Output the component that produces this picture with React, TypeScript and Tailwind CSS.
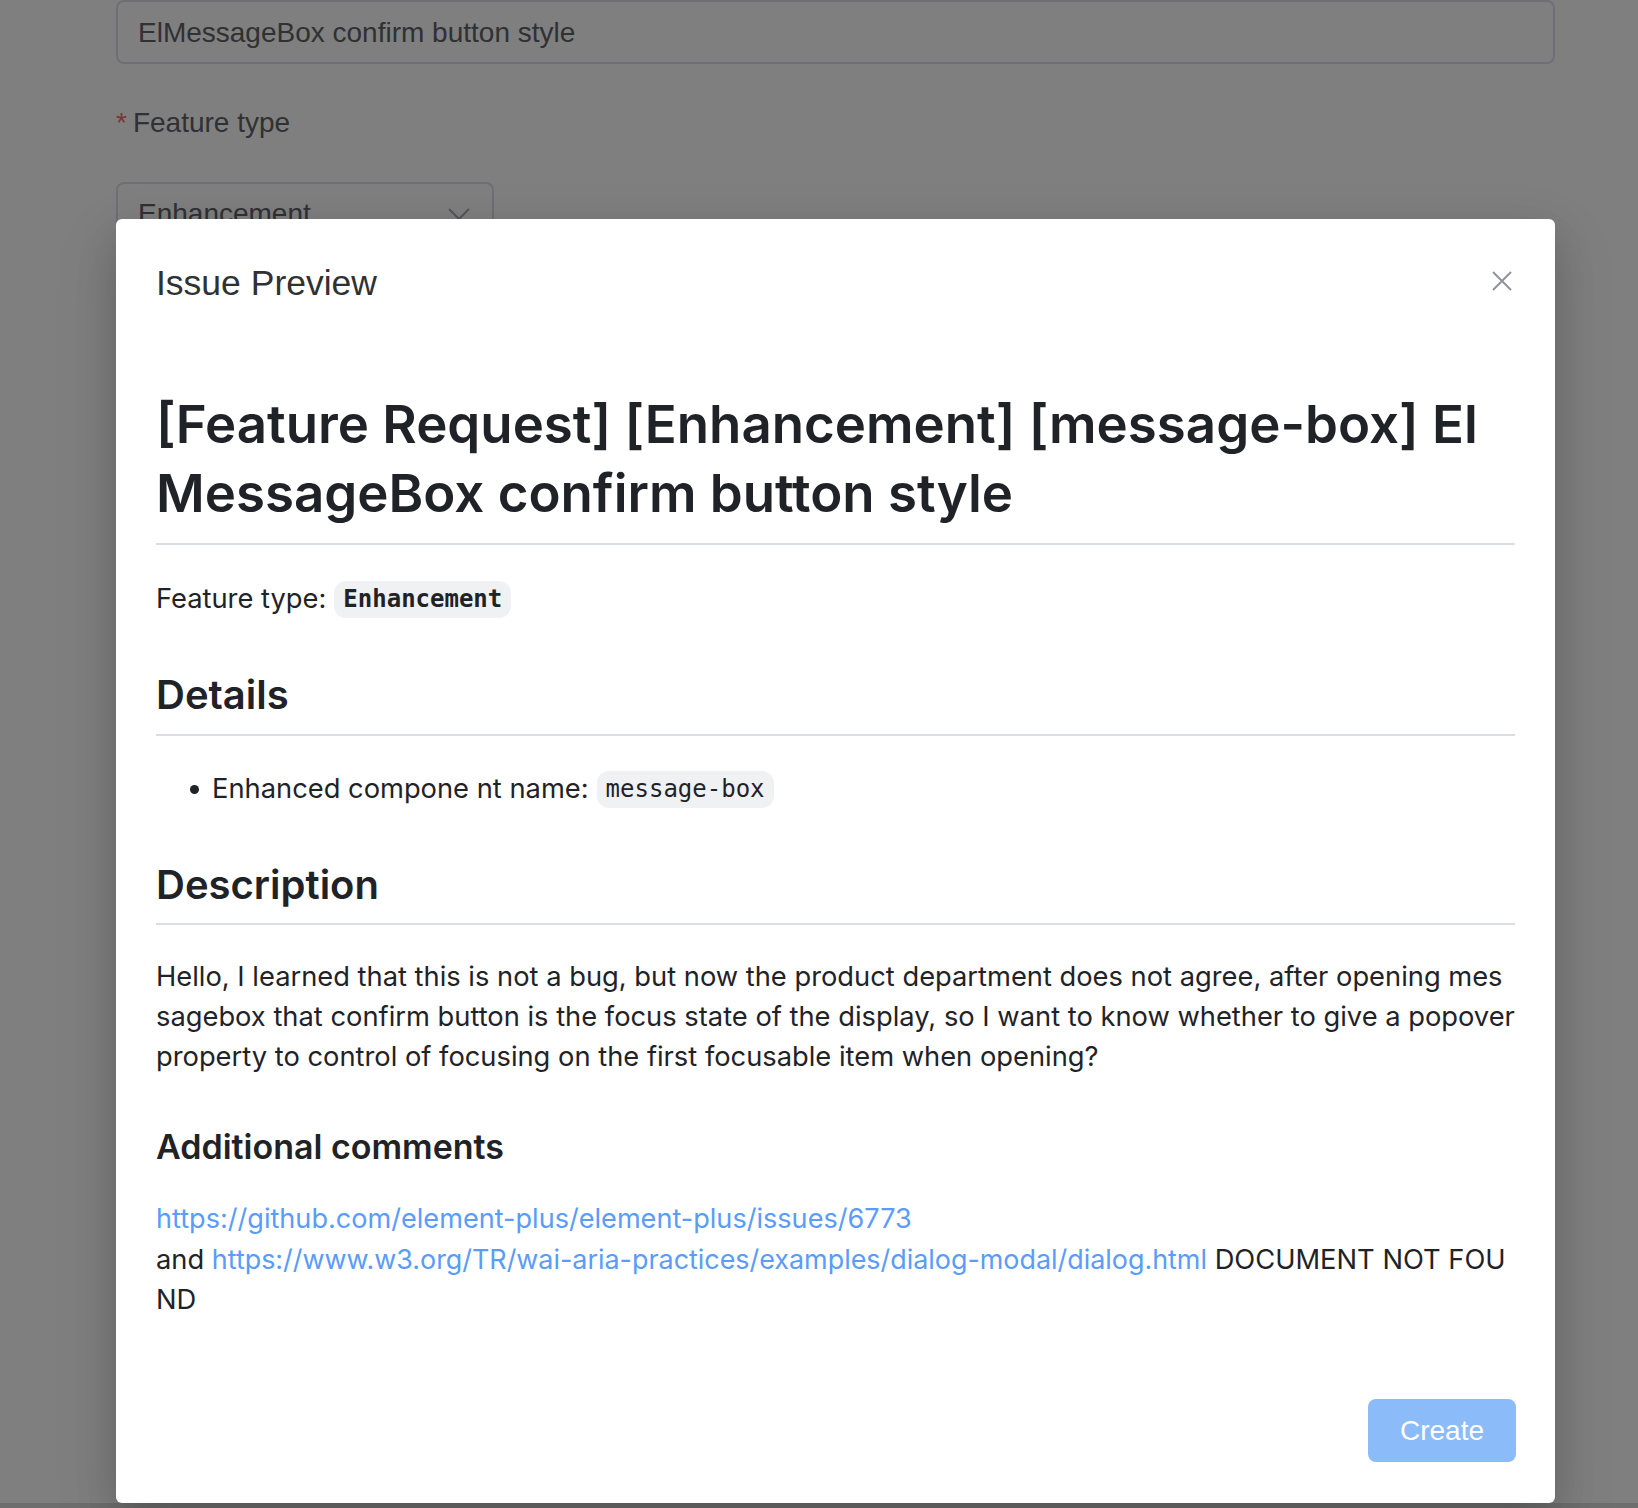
import React from 'react';

const mdFont = '[font-family:Inter,"Noto_Sans",sans-serif]';
const uiFont = "[font-family:'Liberation_Sans',Arial,sans-serif]";
const monoFont = "[font-family:'DejaVu_Sans_Mono',monospace]";

function Code({ children, bold }: { children: React.ReactNode; bold?: boolean }) {
  return (
    <code
      className={`${monoFont} inline-block rounded-[12px] bg-[#eff1f3] px-[9px] py-[5px] align-middle text-[24px] leading-[27px] text-[#1f2328] ${
        bold ? 'font-bold' : 'font-normal'
      }`}
    >
      {children}
    </code>
  );
}

export default function App() {
  return (
    <div className={`${uiFont} relative flex h-[1508px] w-[1638px] flex-col overflow-hidden bg-white`}>
      {/* Form behind the dialog */}
      <div className="flex flex-1 flex-col pl-[116px] pr-[83px]">
        <div className="flex h-[64px] items-center rounded-[8px] border-2 border-[#dcdfe6] px-[20px] pt-[2px] text-[28px] text-[#606266]">
          ElMessageBox confirm button style
        </div>
        <div className="mt-[27px] flex h-[64px] items-center text-[28px] text-[#606266]">
          <span className="mr-[6px] text-[#f56c6c]">*</span>
          Feature type
        </div>
        <div className="mt-[27px] flex h-[64px] w-[378px] items-center justify-between rounded-[8px] border-2 border-[#dcdfe6] pl-[20px] pr-[22px] text-[28px] text-[#606266]">
          <span>Enhancement</span>
          <svg width="22" height="12" viewBox="0 0 22 12" fill="none">
            <polyline points="1,1 11,11 21,1" stroke="#a8abb2" strokeWidth="2" />
          </svg>
        </div>
      </div>
      <div className="h-[5px] bg-[#dcdcdc]" />

      {/* Modal overlay */}
      <div className="absolute inset-0 bg-black/50">
        <div className="ml-[116px] mt-[219px] flex w-[1439px] flex-col rounded-[6px] bg-white shadow-[0_24px_64px_8px_rgba(0,0,0,0.08),0_16px_40px_rgba(0,0,0,0.16)]">
          {/* Header */}
          <div className="flex items-center justify-between pl-[40px] pr-[43px] pt-[40px]">
            <span className="text-[35.5px] leading-[48px] text-[#303133]">Issue Preview</span>
            <svg width="20" height="20" viewBox="0 0 20 20" fill="none" className="-mt-[4px]">
              <path d="M1 1L19 19M19 1L1 19" stroke="#909399" strokeWidth="2" />
            </svg>
          </div>

          {/* Markdown body */}
          <div className={`${mdFont} px-[40px] pt-[83px] text-[27.3px] leading-[40px] text-[#1f2328] [word-break:break-all]`}>
            <h1 className="border-b-2 border-[#d8dee4] pb-[15px] text-[52.8px] font-semibold leading-[69px]">
              [Feature Request] [Enhancement] [message-box] El
              <br />
              MessageBox confirm button style
            </h1>

            <p className="mt-[34px] flex items-center">
              <span className="mr-[8px]">Feature type:</span>
              <Code bold>Enhancement</Code>
            </p>

            <h2 className="mt-[52px] border-b-2 border-[#d8dee4] pb-[15px] text-[40px] font-semibold leading-[48px]">
              Details
            </h2>

            <ul className="mt-[33px] pl-[34px]">
              <li className="flex items-center">
                <span className="mr-[13px] inline-block h-[9px] w-[9px] rounded-full bg-[#1f2328]" />
                <span className="mr-[8px]">Enhanced compone nt name:</span>
                <Code>message-box</Code>
              </li>
            </ul>

            <h2 className="mt-[52px] border-b-2 border-[#d8dee4] pb-[14px] text-[40px] font-semibold leading-[48px]">
              Description
            </h2>

            <p className="mt-[32px] whitespace-nowrap">
              Hello, I learned that this is not a bug, but now the product department does not agree, after opening mes
              <br />
              sagebox that confirm button is the focus state of the display, so I want to know whether to give a popover
              <br />
              property to control of focusing on the first focusable item when opening?
            </p>

            <h3 className="mt-[49px] text-[34px] font-semibold leading-[42px]">Additional comments</h3>

            <p className="mt-[31px] whitespace-nowrap">
              <a className="text-[27.1px] text-[#5a9cf8]">https://github.com/element-plus/element-plus/issues/6773</a>
              <br />
              and{' '}
              <a className="text-[26.9px] text-[#5a9cf8]">
                https://www.w3.org/TR/wai-aria-practices/examples/dialog-modal/dialog.html
              </a>{' '}
              DOCUMENT NOT FOU
              <br />
              ND
            </p>
          </div>

          {/* Footer */}
          <div className="flex justify-end px-[39px] pb-[41px] pt-[79px]">
            <button className="h-[63px] w-[148px] rounded-[8px] bg-[#8bbbf9] text-[28px] text-white">Create</button>
          </div>
        </div>
      </div>
    </div>
  );
}
